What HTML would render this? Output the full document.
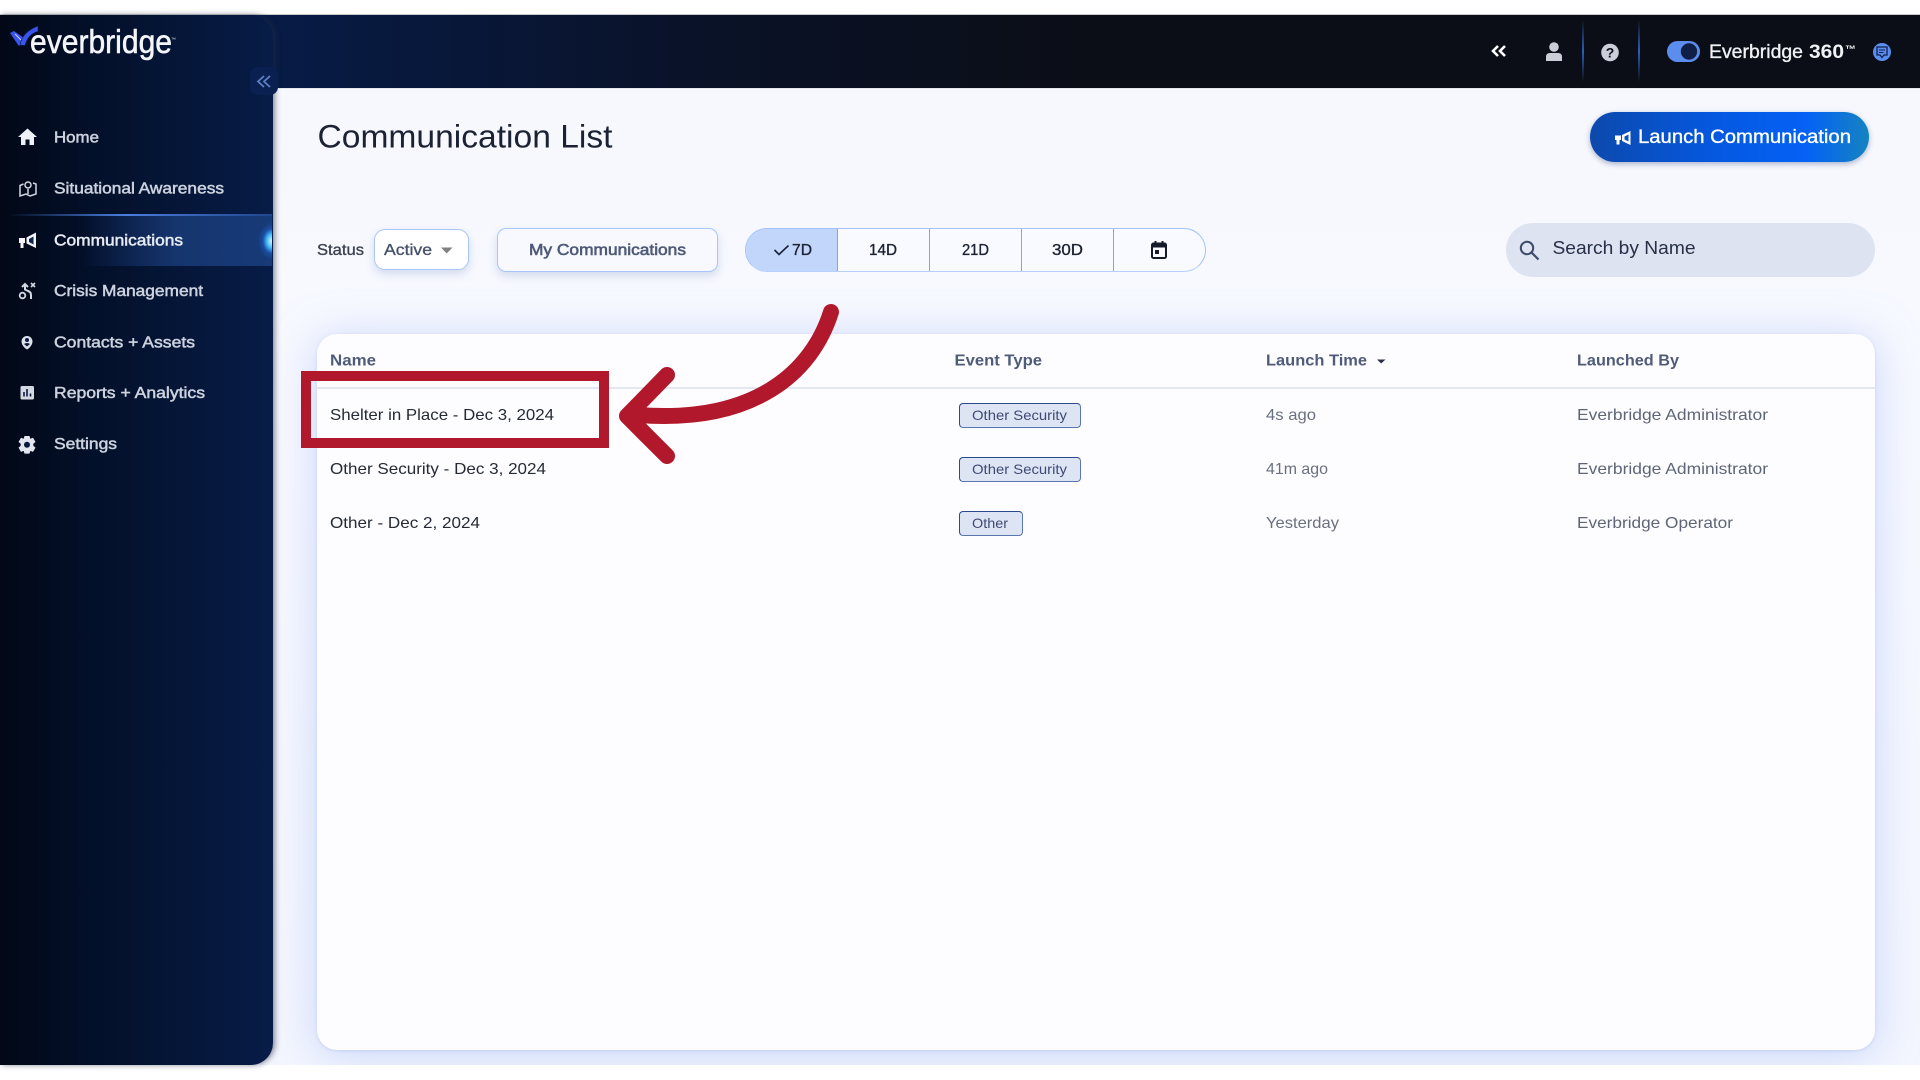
<!DOCTYPE html>
<html lang="en"><head><meta charset="utf-8"><title>Communication List</title>
<style>
html,body{margin:0;padding:0;background:#fff;width:1920px;height:1080px;overflow:hidden;font-family:"Liberation Sans",sans-serif}
.a{position:absolute;box-sizing:border-box}
svg{position:absolute;left:0;top:0}
text{font-family:"Liberation Sans",sans-serif}
.m{stroke-width:.35px;paint-order:stroke}
.n{stroke-width:.5px;paint-order:stroke}
</style></head><body>
<div class="a" style="left:0;top:14px;width:1920px;height:1px;background:#c9c9cb"></div>
<div class="a" style="left:0;top:15px;width:1920px;height:73px;background:linear-gradient(90deg,#071b45 0,#071b45 280px,#0a1228 700px,#0b0e16 1100px,#0b0e16 100%)"></div>
<div class="a" style="left:0;top:88px;width:1920px;height:977px;overflow:hidden;background:linear-gradient(180deg,#f7f8fe 0,#f7f9ff 25%,#f3f6fe 100%);border-top:1px solid #e4e6ea">
<div class="a" style="left:317px;top:245px;width:1558px;height:716px;border-radius:20px;background:#fdfdff;box-shadow:0 4px 42px rgba(165,185,245,.55),0 1px 3px rgba(150,170,220,.35)"></div>
<div class="a" style="left:317px;top:298px;width:1558px;height:1.5px;background:#e3e7f0"></div>
</div>
<div class="a" style="left:0;top:15px;width:273px;height:1050px;border-radius:0 22px 22px 0;background:linear-gradient(90deg,#020817 0,#03102a 35%,#071c47 100%);box-shadow:2px 0 6px rgba(40,45,70,.55)"></div>
<div class="a" style="left:0;top:214px;width:272px;height:52px;background:linear-gradient(90deg,rgba(22,53,110,0) 30%,#16356e 65%,#173a78 100%)"></div>
<div class="a" style="left:8px;top:214px;width:264px;height:1.5px;background:linear-gradient(90deg,rgba(70,125,230,0),#4a7fdf 45%,rgba(70,125,230,.2))"></div>
<div class="a" style="left:258px;top:222px;width:14px;height:38px;background:radial-gradient(ellipse 100% 50% at 100% 50%,#e6f8ff 0,#46c0ff 35%,rgba(30,110,230,.4) 65%,rgba(30,110,230,0) 100%)"></div>
<div class="a" style="left:250px;top:67px;width:28px;height:28px;border-radius:8px;background:#0a2050"></div>
<div class="a" style="left:1582px;top:20px;width:1.5px;height:62px;background:linear-gradient(180deg,rgba(50,100,200,0),#2d5fb5 50%,rgba(50,100,200,0))"></div>
<div class="a" style="left:1638px;top:20px;width:1.5px;height:62px;background:linear-gradient(180deg,rgba(50,100,200,0),#2d5fb5 50%,rgba(50,100,200,0))"></div>
<div class="a" style="left:1590px;top:112px;width:279px;height:50px;border-radius:25px;background:linear-gradient(90deg,#0c49ad 0,#0558e0 45%,#0562f5 78%,#1583c0 100%);box-shadow:0 2px 6px rgba(50,70,120,.4)"></div>
<div class="a" style="left:374px;top:229px;width:95px;height:41px;border-radius:11px;background:#fff;border:1.5px solid #a9c5fb;box-shadow:0 4px 9px rgba(120,140,190,.28)"></div>
<div class="a" style="left:497px;top:228px;width:221px;height:44px;border-radius:9px;background:#f7f9ff;border:1.5px solid #a9c5fb;box-shadow:0 4px 9px rgba(120,140,190,.28)"></div>
<div class="a" style="left:745px;top:228px;width:461px;height:44px;border-radius:22px;background:#f8faff;border:1.5px solid #a3c2fa;overflow:hidden;border-bottom-color:#b6cffb">
<div class="a" style="left:0;top:0;width:92px;height:42px;background:#c2d6fc;border-right:1.5px solid #7ba6f5"></div>
<div class="a" style="left:183px;top:0;width:1px;height:42px;background:#7ba6f5"></div>
<div class="a" style="left:275px;top:0;width:1px;height:42px;background:#7ba6f5"></div>
<div class="a" style="left:367px;top:0;width:1px;height:42px;background:#7ba6f5"></div>
</div>
<div class="a" style="left:1506px;top:223px;width:369px;height:54px;border-radius:27px;background:#dde3f1"></div>
<div class="a" style="left:959px;top:403px;width:122px;height:25px;border-radius:4px;background:#dde5f5;border:1.5px solid #2a4a8c;border-bottom-color:#5a76ae;border-right-color:#5a76ae"></div>
<div class="a" style="left:959px;top:457px;width:122px;height:25px;border-radius:4px;background:#dde5f5;border:1.5px solid #2a4a8c;border-bottom-color:#5a76ae;border-right-color:#5a76ae"></div>
<div class="a" style="left:959px;top:511px;width:64px;height:25px;border-radius:4px;background:#dde5f5;border:1.5px solid #2a4a8c;border-bottom-color:#5a76ae;border-right-color:#5a76ae"></div>

<svg width="1920" height="1080" viewBox="0 0 1920 1080" xmlns="http://www.w3.org/2000/svg">
<!-- logo -->
<path d="M10 33 L14 31 L24 38 L23.500 45.500 L18.500 45.500 Z" fill="#3a55ee"/>
<path d="M20 45 Q22 32 38 26 L38 31.500 Q28 34 25 45.500 Z" fill="#3a55ee" stroke="#0a1840" stroke-width=".6"/>
<path d="M15 34 L21 40" stroke="#c9d3f7" stroke-width="1"/>
<text x="30" y="53" font-size="33" fill="#f3f5fa" stroke="#f3f5fa" stroke-width=".55" paint-order="stroke" textLength="142" lengthAdjust="spacingAndGlyphs">everbridge</text>
<text x="171" y="41" font-size="5" fill="#d5d9e3">™</text>
<path d="M264 76 L258 81.500 L264 87 M270 76 L264 81.500 L270 87" fill="none" stroke="#5c7fc2" stroke-width="1.800"/>
<!-- nav icons -->
<path d="M27.500 128.500 L18 137 H21 V145 H25.500 V139.500 H29.500 V145 H34 V137 H37 Z" fill="#eef1f8"/>
<g fill="none" stroke="#d3d8e3" stroke-width="1.500"><path d="M23.500 184 L20 185.500 V196 L26 194 L30 196 L36 194 V184 L33 183"/><circle cx="28" cy="185" r="3"/><path d="M28 189 V194"/></g>
<path d="M19 238 H25 V243 H23.500 V248 H20.500 V243 H19 Z" fill="#f3f5fa"/>
<path d="M26.500 237.500 L36 232.500 V248 L26.500 243.500 Z" fill="#f3f5fa"/>
<path d="M29 239 L33.500 236.500 V244.500 L29 242 Z" fill="#0d2350"/>
<circle cx="22.500" cy="295.500" r="2.800" fill="none" stroke="#d3d8e3" stroke-width="1.800"/>
<path d="M31 299 V295 Q31 292 28 291 L25 289.500 V285 M22 287 L25 284 L28 287" fill="none" stroke="#d3d8e3" stroke-width="2"/>
<path d="M31 283 L35 287 M35 283 L31 287" stroke="#d3d8e3" stroke-width="1.600"/>
<path d="M27 336 A5.500 5.500 0 0 1 32.500 341.500 C32.500 345 29 348.500 27 349.500 C25 348.500 21.500 345 21.500 341.500 A5.500 5.500 0 0 1 27 336 Z" fill="#dde1ea"/><circle cx="27" cy="340" r="2" fill="#0a1a3c"/><path d="M24 344 Q27 342 30 344 L27 346.500 Z" fill="#0a1a3c"/>
<rect x="20.500" y="386" width="13.500" height="13.500" rx="1.500" fill="#d3d8e3"/><path d="M24 396.500 V392 M27 396.500 V389 M30.500 396.500 V393.500" stroke="#0a1a3c" stroke-width="1.600"/>
<path d="M24.500 436 H29.500 L30.300 438.700 L33 437.700 L35.500 442 L33.300 443.800 V445.800 L35.500 447.600 L33 451.900 L30.300 450.900 L29.500 453.600 H24.500 L23.700 450.900 L21 451.900 L18.500 447.600 L20.700 445.800 V443.800 L18.500 442 L21 437.700 L23.700 438.700 Z" fill="#e3e6ee"/><circle cx="27" cy="444.800" r="3" fill="#081a3e"/>
<!-- nav text -->
<g font-size="16" fill="#cdd2df" stroke="#cdd2df" class="n">
<text x="54" y="142.500" textLength="45" lengthAdjust="spacingAndGlyphs">Home</text>
<text x="54" y="193.500" textLength="170" lengthAdjust="spacingAndGlyphs">Situational Awareness</text>
<text x="54" y="245.500" textLength="129" lengthAdjust="spacingAndGlyphs" fill="#e8ebf3" stroke="#e8ebf3">Communications</text>
<text x="54" y="296" textLength="149" lengthAdjust="spacingAndGlyphs">Crisis Management</text>
<text x="54" y="347.500" textLength="141" lengthAdjust="spacingAndGlyphs">Contacts + Assets</text>
<text x="54" y="398" textLength="151" lengthAdjust="spacingAndGlyphs">Reports + Analytics</text>
<text x="54" y="449" textLength="63" lengthAdjust="spacingAndGlyphs">Settings</text>
</g>
<!-- topbar right -->
<path d="M1498 46 L1493 51 L1498 56 M1505 46 L1500 51 L1505 56" fill="none" stroke="#fff" stroke-width="2.600"/>
<circle cx="1554" cy="47" r="4.800" fill="#c9ced8"/><path d="M1546 61 V57 Q1546 53 1550 53 H1558 Q1562 53 1562 57 V61 Z" fill="#c9ced8"/>
<circle cx="1610" cy="52.500" r="8.800" fill="#c9ced8"/><text x="1610" y="57.500" font-size="14" font-weight="700" fill="#0b0e16" text-anchor="middle">?</text>
<rect x="1667" y="41" width="33" height="21" rx="10.500" fill="#5b8dee"/><circle cx="1689" cy="51.500" r="8.200" fill="#0f1f45"/>
<text x="1709" y="58" font-size="19" fill="#f0f2f5" stroke="#f0f2f5" class="m" textLength="94" lengthAdjust="spacingAndGlyphs">Everbridge</text>
<text x="1809" y="58" font-size="19" font-weight="700" fill="#f0f2f5" textLength="35" lengthAdjust="spacingAndGlyphs">360</text>
<text x="1845" y="53" font-size="11" font-weight="700" fill="#f0f2f5" textLength="11" lengthAdjust="spacingAndGlyphs">™</text>
<circle cx="1882" cy="52" r="9" fill="#5b8dee"/><path d="M1877 47 H1887 V55 H1884 L1882 57.500 L1880 55 H1877 Z" fill="none" stroke="#10214d" stroke-width="1.300"/><path d="M1879 50 H1885 M1879 52.500 H1883.500" stroke="#10214d" stroke-width="1"/>
<!-- title -->
<text x="317.500" y="147.500" font-size="32" fill="#1a2234" textLength="295" lengthAdjust="spacingAndGlyphs">Communication List</text>
<!-- launch -->
<path d="M1615 135.500 H1621 V140 H1619.500 V144.500 H1616.500 V140 H1615 Z" fill="#fff"/>
<path d="M1622 135 L1630.500 131 V145 L1622 141 Z" fill="#fff"/>
<path d="M1624.500 136.500 L1628.500 134.500 V141.500 L1624.500 139.500 Z" fill="#0c52c4"/>
<text x="1638" y="143" font-size="19" fill="#fff" class="m" stroke="#fff" textLength="213" lengthAdjust="spacingAndGlyphs">Launch Communication</text>
<!-- filters -->
<text x="317" y="255" font-size="16" fill="#3c4350" stroke="#3c4350" class="m" textLength="47" lengthAdjust="spacingAndGlyphs">Status</text>
<text x="384" y="255" font-size="16" fill="#47526b" stroke="#47526b" class="m" textLength="48" lengthAdjust="spacingAndGlyphs">Active</text>
<path d="M441 247.500 H452.500 L446.700 253.500 Z" fill="#808080"/>
<text x="529" y="255" font-size="16" fill="#4f5a76" stroke="#4f5a76" stroke-width=".6" paint-order="stroke" textLength="157" lengthAdjust="spacingAndGlyphs">My Communications</text>
<path d="M774.500 250 L779 254.500 L788.500 245.500" fill="none" stroke="#1a2138" stroke-width="1.600"/>
<g font-size="16" fill="#1c2233" stroke="#1c2233" class="m">
<text x="792" y="255" textLength="20" lengthAdjust="spacingAndGlyphs">7D</text>
<text x="869" y="255" textLength="28" lengthAdjust="spacingAndGlyphs">14D</text>
<text x="962" y="255" textLength="27" lengthAdjust="spacingAndGlyphs">21D</text>
<text x="1052" y="255" textLength="31" lengthAdjust="spacingAndGlyphs">30D</text>
</g>
<rect x="1152" y="243.500" width="14" height="14.500" rx="1.500" fill="none" stroke="#151a2a" stroke-width="2"/><rect x="1152" y="243" width="14" height="4.500" fill="#151a2a"/><rect x="1154.500" y="241" width="2" height="3" fill="#151a2a"/><rect x="1161.500" y="241" width="2" height="3" fill="#151a2a"/><rect x="1155" y="250" width="4" height="4" fill="#151a2a"/>
<!-- search -->
<circle cx="1527" cy="248" r="6.200" fill="none" stroke="#3c4a6b" stroke-width="2"/><path d="M1531.500 252.500 L1538.500 259.500" stroke="#3c4a6b" stroke-width="2.200"/>
<text x="1552.500" y="254" font-size="18" fill="#283048" textLength="143" lengthAdjust="spacingAndGlyphs">Search by Name</text>
<!-- table header -->
<g font-size="15.500" font-weight="700" fill="#4f5b78">
<text x="330" y="365.500" textLength="46" lengthAdjust="spacingAndGlyphs">Name</text>
<text x="954.500" y="365.500" textLength="87.500" lengthAdjust="spacingAndGlyphs">Event Type</text>
<text x="1266" y="365.500" textLength="101" lengthAdjust="spacingAndGlyphs">Launch Time</text>
<text x="1577" y="365.500" textLength="102" lengthAdjust="spacingAndGlyphs">Launched By</text>
</g>
<path d="M1377 359.500 H1385.500 L1381.200 363.500 Z" fill="#2a3146"/>
<!-- rows -->
<g font-size="16" fill="#252a35">
<text x="330" y="420" textLength="224" lengthAdjust="spacingAndGlyphs">Shelter in Place - Dec 3, 2024</text>
<text x="330" y="474" textLength="216" lengthAdjust="spacingAndGlyphs">Other Security - Dec 3, 2024</text>
<text x="330" y="528" textLength="150" lengthAdjust="spacingAndGlyphs">Other - Dec 2, 2024</text>
</g>
<g font-size="14" fill="#3e4a72">
<text x="972" y="420" textLength="95" lengthAdjust="spacingAndGlyphs">Other Security</text>
<text x="972" y="474" textLength="95" lengthAdjust="spacingAndGlyphs">Other Security</text>
<text x="972" y="528" textLength="36" lengthAdjust="spacingAndGlyphs">Other</text>
</g>
<g font-size="16" fill="#6a7080">
<text x="1266" y="420" textLength="50" lengthAdjust="spacingAndGlyphs">4s ago</text>
<text x="1266" y="474" textLength="62" lengthAdjust="spacingAndGlyphs">41m ago</text>
<text x="1266" y="528" textLength="73" lengthAdjust="spacingAndGlyphs">Yesterday</text>
</g>
<g font-size="16" fill="#5d6576">
<text x="1577" y="420" textLength="191" lengthAdjust="spacingAndGlyphs">Everbridge Administrator</text>
<text x="1577" y="474" textLength="191" lengthAdjust="spacingAndGlyphs">Everbridge Administrator</text>
<text x="1577" y="528" textLength="156" lengthAdjust="spacingAndGlyphs">Everbridge Operator</text>
</g>
<!-- annotation -->
<rect x="306" y="376" width="298" height="67" fill="none" stroke="#b2182b" stroke-width="10"/>
<path d="M831 312 C812 372 755 424 638 415" fill="none" stroke="#b2182b" stroke-width="16" stroke-linecap="round"/>
<path d="M667 375 L627 416 L667 456" fill="none" stroke="#b2182b" stroke-width="16" stroke-linecap="round" stroke-linejoin="round"/>
</svg>
</body></html>
